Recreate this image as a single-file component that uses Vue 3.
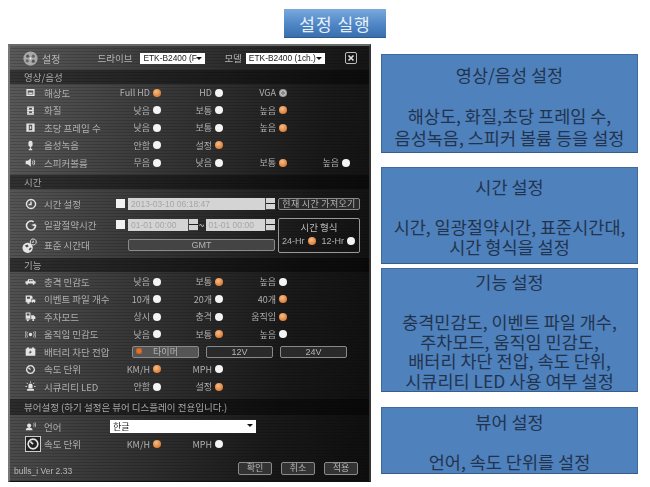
<script setup>
const icons = {
  display: { d: 'M2 3h12v10H2zM4 5v6h8V5z', f: 'M5 8h6v2H5z' },
  film: { d: 'M3 2h10v12H3zM6 4v3h4V4zM6 9v3h4V9z', f: 'M3.8 3.5h1v1h-1zM3.8 6h1v1h-1zM3.8 9h1v1h-1zM3.8 11.5h1v1h-1zM11.2 3.5h1v1h-1zM11.2 6h1v1h-1zM11.2 9h1v1h-1zM11.2 11.5h1v1h-1z', dark: true },
  frames: { d: 'M2 2h12v12H2zM5.5 4v8h5V4z', f: 'M7 6h2v4H7z' },
  mic: { d: 'M8 1c1.7 0 3 1.2 3 2.8v3.4C11 8.8 9.7 10 8 10S5 8.8 5 7.2V3.8C5 2.2 6.3 1 8 1zM7 10.5h2V13h1.5v2h-5v-2H7z' },
  speaker: { d: 'M1 5.5h3L8.5 2v12L4 10.5H1z', s: 'M10.5 5.5c1.2 1.5 1.2 3.5 0 5M12.5 4c2 2.4 2 5.6 0 8' },
  clock: { s: 'M8 2a6 6 0 1 0 .01 0M8 4.5V8.6H4.8', w: 1.9 },
  dst: { s: 'M11.5 3.8A6 6 0 1 0 14 8', w: 2.2, d: 'M8 8l6-2v4z' },
  globe: { d: 'M6 5a5.5 5.5 0 1 0 .01 0zM3 8l3-1 1 2-2 1zM7 12l2-2 1.4 1-2 2.4z', s: 'M12 1a3.2 3.2 0 1 0 .01 0M12 2.8v1.8h-1.5', w: 1 },
  car: { d: 'M0.5 8l2.5-.5 2-3h6l2.5 3 2 .5v3h-15zM6 5.5v2h2v-2zM9 5.5v2h2v-2z', f: 'M3 10a1.3 1.3 0 1 0 .01 0M12.5 10a1.3 1.3 0 1 0 .01 0' },
  event: { d: 'M1 2h8l2 2v3H9v5H6.5v2h-3v-2H1zM3 4v3h4V4z', f: 'M9.5 8h5.5v3.5h-1V13h-1v-1.5h-2V13h-1v-1.5h-.5z' },
  truck: { d: 'M1 2h7v8.5H1zM2.5 3.5v3h4v-3zM9 6h3.5l2.5 2.5v3H9zM1 11h7v1.5H1z', f: 'M4 12a1.5 1.5 0 1 0 .01 0M12 11.5a1.5 1.5 0 1 0 .01 0' },
  motion: { d: 'M8 5.5a2.5 2.5 0 1 0 .01 0z', s: 'M3.8 4.2c-1.5 2.2-1.5 5.4 0 7.6M12.2 4.2c1.5 2.2 1.5 5.4 0 7.6M1.7 2.8c-1.9 3-1.9 7.4 0 10.4M14.3 2.8c1.9 3 1.9 7.4 0 10.4', w: 1 },
  battery: { d: 'M3 2h3v1.5h4V2h3v1.5h2V14H1V3.5h2zM9 6L5 9.5h2.4L6 12l4.5-3.5H8z' },
  speedo: { s: 'M8 2.4a5.6 5.6 0 1 0 .01 0M8 8.2L5 5.4', w: 1.9 },
  led: { d: 'M5 6.5C5 4.8 6.2 3.5 8 3.5s3 1.3 3 3V11H5zM3 11.5h10V14H3z', s: 'M8 .5v2M2.4 2.6l1.8 1.8M13.6 2.6l-1.8 1.8M.6 8h2.4M13 8h2.4', w: 1.2 },
  person: { d: 'M6 3.5a3 3 0 1 1-.01 0zM1 13.5c.2-3 2-4.2 5-4.2s4.8 1.2 5 4.2z', s: 'M12.5 3c1 1.6 1 3.6 0 5M14.5 2c1.3 2.2 1.3 5 0 7', w: 1 },
}

const videoRows = [
  { icon: 'display', label: '해상도', options: [['Full HD', 'on'], ['HD', ''], ['VGA', 'off']] },
  { icon: 'film', label: '화질', options: [['낮음', ''], ['보통', ''], ['높음', 'on']] },
  { icon: 'frames', label: '초당 프레임 수', options: [['낮음', ''], ['보통', ''], ['높음', 'on']] },
  { icon: 'mic', label: '음성녹음', options: [['안함', ''], ['설정', 'on']] },
  { icon: 'speaker', label: '스피커볼륨', options: [['무음', ''], ['낮음', ''], ['보통', 'on'], ['높음', '']] },
]

const featureRows = [
  { icon: 'car', label: '충격 민감도', options: [['낮음', ''], ['보통', 'on'], ['높음', '']] },
  { icon: 'event', label: '이벤트 파일 개수', options: [['10개', ''], ['20개', ''], ['40개', 'on']] },
  { icon: 'truck', label: '주차모드', options: [['상시', ''], ['충격', ''], ['움직임', 'on']] },
  { icon: 'motion', label: '움직임 민감도', options: [['낮음', ''], ['보통', 'on'], ['높음', '']] },
]

const featureRowsEnd = [
  { icon: 'speedo', label: '속도 단위', options: [['KM/H', 'on'], ['MPH', '']] },
  { icon: 'led', label: '시큐리티 LED', options: [['안함', ''], ['설정', 'on']] },
]

const notes = [
  { title: '영상/음성 설정', kind: 'video', lines: ['해상도, 화질,초당 프레임 수,', '음성녹음, 스피커 볼륨 등을 설정'] },
  { title: '시간 설정', kind: 'time', lines: ['시간, 일광절약시간, 표준시간대,', '시간 형식을 설정'] },
  { title: '기능 설정', kind: 'feature', lines: ['충격민감도, 이벤트 파일 개수,', '주차모드, 움직임 민감도,', '배터리 차단 전압, 속도 단위,', '시큐리티 LED 사용 여부 설정'] },
  { title: '뷰어 설정', kind: 'viewer', lines: ['언어, 속도 단위를 설정'] },
]
</script>

<template>
  <div class="page">
    <div class="run-title">설정 실행</div>

    <div class="main">
      <section class="window">
        <header class="win-head">
          <svg class="logo" viewBox="0 0 16 16" aria-hidden="true">
            <circle cx="8" cy="8" r="7.6" fill="#a9a9a9" />
            <circle cx="5" cy="5.5" r="1.7" fill="#555" />
            <circle cx="11" cy="5.5" r="1.7" fill="#666" />
            <circle cx="4.5" cy="10.5" r="1.7" fill="#666" />
            <circle cx="11" cy="10.8" r="1.7" fill="#555" />
            <circle cx="8" cy="8" r="1" fill="#eee" />
          </svg>
          <span class="win-title">설정</span>
          <span class="head-label drive-label">드라이브</span>
          <div class="select drive">ETK-B2400 (F<i class="caret"></i></div>
          <span class="head-label model-label">모델</span>
          <div class="select model">ETK-B2400 (1ch.)<i class="caret"></i></div>
          <span class="close">
            <svg viewBox="0 0 12 12" aria-hidden="true"><path d="M3 3l6 6M9 3l-6 6" /></svg>
          </span>
        </header>

        <div class="band">영상/음성</div>
        <div class="body video-body">
          <div v-for="row in videoRows" :key="row.label" class="row">
            <svg class="icon" viewBox="0 0 16 16" aria-hidden="true">
              <path v-if="icons[row.icon].d" class="solid" :d="icons[row.icon].d" />
              <path v-if="icons[row.icon].f" class="solid" :class="{ inner: icons[row.icon].dark }" :d="icons[row.icon].f" />
              <path v-if="icons[row.icon].s" class="line" :stroke-width="icons[row.icon].w || 1.3" :d="icons[row.icon].s" />
            </svg>
            <span class="label">{{ row.label }}</span>
            <span v-for="opt in row.options" :key="opt[0]" class="opt">
              {{ opt[0] }}<i class="dot" :class="opt[1]"></i>
            </span>
          </div>
        </div>

        <div class="band">시간</div>
        <div class="body time-body">
          <div class="time-grid">
            <svg class="icon" viewBox="0 0 16 16" aria-hidden="true">
              <path class="line" stroke-width="1.9" :d="icons.clock.s" />
            </svg>
            <span class="label">시간 설정</span>
            <i class="check"></i>
            <div class="field wide">2013-03-10 06:18:47<i class="spin"></i></div>
            <div class="ghost-btn now">현재 시간 가져오기</div>

            <svg class="icon" viewBox="0 0 16 16" aria-hidden="true">
              <path class="line" stroke-width="2.2" :d="icons.dst.s" />
              <path class="solid" :d="icons.dst.d" />
            </svg>
            <span class="label">일광절약시간</span>
            <i class="check"></i>
            <div class="range">
              <div class="field">01-01 00:00<i class="spin"></i></div>
              <span class="tilde">~</span>
              <div class="field">01-01 00:00<i class="spin"></i></div>
            </div>
            <div class="format">
              <div class="format-title">시간 형식</div>
              <div class="format-opts">
                <span class="opt">24-Hr<i class="dot on"></i></span>
                <span class="opt">12-Hr<i class="dot"></i></span>
              </div>
            </div>

            <svg class="icon globe" viewBox="0 0 16 16" aria-hidden="true">
              <path class="solid" :d="icons.globe.d" />
              <path class="line" stroke-width="1" :d="icons.globe.s" />
            </svg>
            <span class="label">표준 시간대</span>
            <span></span>
            <div class="ghost-btn gmt">GMT</div>
          </div>
        </div>

        <div class="band">기능</div>
        <div class="body feature-body">
          <div v-for="row in featureRows" :key="row.label" class="row">
            <svg class="icon" viewBox="0 0 16 16" aria-hidden="true">
              <path v-if="icons[row.icon].d" class="solid" :d="icons[row.icon].d" />
              <path v-if="icons[row.icon].f" class="solid" :d="icons[row.icon].f" />
              <path v-if="icons[row.icon].s" class="line" :stroke-width="icons[row.icon].w || 1.3" :d="icons[row.icon].s" />
            </svg>
            <span class="label">{{ row.label }}</span>
            <span v-for="opt in row.options" :key="opt[0]" class="opt">
              {{ opt[0] }}<i class="dot" :class="opt[1]"></i>
            </span>
          </div>
          <div class="row">
            <svg class="icon" viewBox="0 0 16 16" aria-hidden="true">
              <path class="solid" :d="icons.battery.d" />
            </svg>
            <span class="label">배터리 차단 전압</span>
            <div class="volts">
              <div class="ghost-btn volt active"><i class="led-box"></i>타이머</div>
              <div class="ghost-btn volt">12V</div>
              <div class="ghost-btn volt">24V</div>
            </div>
          </div>
          <div v-for="row in featureRowsEnd" :key="row.label" class="row">
            <svg class="icon" viewBox="0 0 16 16" aria-hidden="true">
              <path v-if="icons[row.icon].d" class="solid" :d="icons[row.icon].d" />
              <path v-if="icons[row.icon].s" class="line" :stroke-width="icons[row.icon].w || 1.3" :d="icons[row.icon].s" />
            </svg>
            <span class="label">{{ row.label }}</span>
            <span v-for="opt in row.options" :key="opt[0]" class="opt">
              {{ opt[0] }}<i class="dot" :class="opt[1]"></i>
            </span>
          </div>
        </div>

        <div class="band viewer-band">뷰어설정 (하기 설정은 뷰어 디스플레이 전용입니다.)</div>
        <div class="body viewer-body">
          <div class="row">
            <svg class="icon" viewBox="0 0 16 16" aria-hidden="true">
              <path class="solid" :d="icons.person.d" />
              <path class="line" stroke-width="1" :d="icons.person.s" />
            </svg>
            <span class="label">언어</span>
            <div class="select language">한글<i class="caret"></i></div>
          </div>
          <div class="row">
            <span class="boxed-icon">
              <svg viewBox="0 0 16 16" aria-hidden="true">
                <path class="line" stroke-width="1.9" :d="icons.speedo.s" />
              </svg>
            </span>
            <span class="label">속도 단위</span>
            <span class="opt">KM/H<i class="dot on"></i></span>
            <span class="opt">MPH<i class="dot"></i></span>
          </div>
        </div>

        <footer class="win-foot">
          <span class="version">bulls_i Ver 2.33</span>
          <div class="foot-btns">
            <div class="ghost-btn foot">확인</div>
            <div class="ghost-btn foot">취소</div>
            <div class="ghost-btn foot">적용</div>
          </div>
        </footer>
      </section>

      <aside class="notes">
        <div v-for="note in notes" :key="note.title" class="note" :class="note.kind">
          <div class="note-title">{{ note.title }}</div>
          <div class="note-lines">
            <div v-for="line in note.lines" :key="line">{{ line }}</div>
          </div>
        </div>
      </aside>
    </div>
  </div>
</template>

<style>
html,
body {
  margin: 0;
  background: #fff;
}
</style>

<style scoped>
.page {
  width: 650px;
  height: 487px;
  overflow: hidden;
  background: #fff;
  font-family: 'Noto Sans CJK KR', 'Liberation Sans', sans-serif;
}

.run-title {
  width: 102px;
  height: 29px;
  margin: 9px 0 0 284px;
  box-sizing: border-box;
  display: flex;
  align-items: center;
  justify-content: center;
  font-size: 17px;
  letter-spacing: 1px;
  color: #e8f0fa;
  background: linear-gradient(#7aa9dc, #4f86c6 55%, #3a6fae);
  border-bottom: 1px solid #2f5a8e;
}

.main {
  display: flex;
  align-items: flex-start;
  gap: 10px;
  margin: 6px 0 0 8px;
}

/* program window */
.window {
  width: 363px;
  height: 438px;
  box-sizing: border-box;
  display: flex;
  flex-direction: column;
  border-top: 2px solid #6a6a6a;
  border-left: 2px solid #777;
  border-right: 2px solid #333;
  border-bottom: 1px solid #111;
  color: #b4b4b4;
  font-size: 9.5px;
  background:
    repeating-linear-gradient(0deg, rgba(0, 0, 0, 0.16) 0 1px, transparent 1px 3px),
    linear-gradient(100deg, #5a5a5a 0%, #3a3a3a 35%, #191919 75%, #0e0e0e 100%);
  filter: blur(0.35px);
}

.win-head {
  height: 24px;
  display: flex;
  align-items: center;
  flex: 0 0 auto;
}

.logo {
  width: 15px;
  height: 15px;
  margin-left: 13px;
}

.win-title {
  margin-left: 4px;
  font-size: 10px;
}

.head-label {
  font-size: 9.5px;
}

.drive-label {
  margin-left: 37px;
}

.model-label {
  margin-left: 19px;
}

.select {
  position: relative;
  height: 11px;
  line-height: 11px;
  box-sizing: border-box;
  padding-left: 3px;
  background: #fff;
  color: #222;
  font-size: 8.4px;
  font-family: 'Liberation Sans', 'Noto Sans CJK KR', sans-serif;
  white-space: nowrap;
  overflow: hidden;
}

.drive {
  width: 65px;
  margin-left: 8px;
}

.model {
  width: 79px;
  margin-left: 4px;
}

.caret {
  position: absolute;
  right: 3px;
  top: 4px;
  border-left: 3px solid transparent;
  border-right: 3px solid transparent;
  border-top: 3px solid #111;
}

.close {
  width: 12px;
  height: 12px;
  margin-left: 20px;
  box-sizing: border-box;
  border: 1px solid #bbb;
  border-radius: 2px;
  display: flex;
}

.close svg {
  width: 100%;
  height: 100%;
}

.close path {
  stroke: #ddd;
  stroke-width: 2;
  fill: none;
}

.band {
  height: 14px;
  line-height: 14px;
  flex: 0 0 auto;
  padding-left: 14px;
  background: rgba(0, 0, 0, 0.42);
  color: #a8a8a8;
}

.viewer-band {
  height: 16px;
  line-height: 16px;
}

.body {
  flex: 0 0 auto;
}

.video-body {
  height: 91px;
}

.time-body {
  height: 69px;
}

.feature-body {
  height: 127px;
  padding-top: 1px;
  box-sizing: border-box;
}

.viewer-body {
  height: 40px;
  padding-top: 3px;
  box-sizing: border-box;
}

.row {
  height: 17.5px;
  display: grid;
  grid-template-columns: 12px 22px 72px 45px 62px 64px 63px;
  align-items: center;
}

.row > .icon,
.row > .boxed-icon {
  grid-column: 2;
}

.row .label {
  grid-column: 3;
}

.icon {
  width: 11px;
  height: 11px;
  margin-left: 3px;
}

.solid {
  fill: #e4e4e4;
  fill-rule: evenodd;
}

.solid.inner {
  fill: #333;
}

.line {
  fill: none;
  stroke: #e4e4e4;
}

.label {
  white-space: nowrap;
  color: #aeaeae;
}

.opt {
  display: flex;
  align-items: center;
  justify-content: flex-end;
  gap: 3px;
  white-space: nowrap;
  color: #b0b0b0;
  font-size: 9px;
}

.dot {
  width: 8px;
  height: 8px;
  border-radius: 50%;
  background: #f4f4f4;
  flex: 0 0 auto;
}

.dot.on {
  background: radial-gradient(circle at 40% 35%, #f6bd8a, #dd7f36 70%, #b5682e);
}

.dot.off {
  background: radial-gradient(circle, #8b8b8b 30%, #cfcfcf 32%, #8e8e8e 70%);
}

/* time section */
.time-grid {
  display: grid;
  grid-template-columns: 12px 22px 72px 12px 147px 85px;
  grid-template-rows: 21px 21px 20px;
  padding-top: 4px;
  align-items: center;
}

.time-grid > .icon {
  grid-column: 2;
  width: 12px;
  height: 12px;
}

.time-grid > .icon.globe {
  width: 15px;
  height: 15px;
  margin-left: 0;
}

.check {
  width: 9px;
  height: 9px;
  background: #f2f2f2;
  grid-column: 4;
}

.field {
  position: relative;
  height: 12px;
  line-height: 12px;
  padding-left: 3px;
  box-sizing: border-box;
  background: #d4d4d4;
  color: #a5a5a5;
  font-size: 8.5px;
  font-family: 'Liberation Sans', sans-serif;
  flex: 1;
  min-width: 0;
  white-space: nowrap;
}

.field.wide {
  flex: none;
}

.spin {
  position: absolute;
  right: 0;
  top: 0;
  bottom: 0;
  width: 10px;
  box-sizing: border-box;
  background: linear-gradient(#d4d4d4 0 5px, #222 5px 6px, #d4d4d4 6px);
  border-left: 1px solid #444;
  border-bottom: 1px solid #444;
}

.range {
  display: flex;
  align-items: center;
}

.tilde {
  width: 8px;
  text-align: center;
  color: #ddd;
  font-size: 10px;
  flex: 0 0 auto;
}

.ghost-btn {
  height: 12px;
  line-height: 10px;
  box-sizing: border-box;
  border: 1px solid #8a8a8a;
  border-radius: 2px;
  background: #333;
  color: #b4b4b4;
  text-align: center;
  font-size: 9px;
  white-space: nowrap;
}

.now {
  margin-left: 3px;
  background: #2b2b2b;
  font-size: 9px;
  letter-spacing: 0.3px;
}

.gmt {
  grid-column: 5;
  grid-row: 3;
  background: #444;
  font-family: 'Liberation Sans', sans-serif;
}

.format {
  grid-column: 6;
  grid-row: 2 / span 2;
  align-self: start;
  width: 82px;
  height: 35px;
  margin: 4px 0 0 3px;
  box-sizing: border-box;
  border: 1px solid #999;
  border-radius: 2px;
  text-align: center;
}

.format-title {
  height: 17px;
  line-height: 17px;
  color: #bdbdbd;
}

.format-opts {
  display: flex;
  justify-content: space-between;
  padding: 0 4px 0 3px;
}

.format-opts .opt {
  font-family: 'Liberation Sans', sans-serif;
}

/* feature section */
.volts {
  grid-column: 4 / span 4;
  display: flex;
  gap: 7px;
  margin-left: 16px;
}

.volt {
  position: relative;
  width: 67px;
  background: #2a2a2a;
  font-family: 'Liberation Sans', sans-serif;
}

.volt.active {
  background: #555;
  font-family: 'Noto Sans CJK KR', sans-serif;
}

.led-box {
  position: absolute;
  left: 3px;
  top: 1px;
  width: 6px;
  height: 6px;
  background: radial-gradient(circle, #e5702a 40%, #7a4a2a);
}

/* viewer section */
.language {
  grid-column: 4 / span 4;
  width: 146px;
  height: 13px;
  line-height: 13px;
  margin-left: -6px;
  font-family: 'Noto Sans CJK KR', sans-serif;
  font-size: 9px;
}

.boxed-icon {
  width: 16px;
  height: 16px;
  margin-left: 3px;
  box-sizing: border-box;
  border: 1px solid #ccc;
  background: #222;
  display: flex;
}

.win-foot {
  flex: 1;
  display: flex;
  align-items: center;
  justify-content: space-between;
  padding: 0 11px 0 4px;
}

.version {
  font-family: 'Liberation Sans', sans-serif;
  font-size: 8.5px;
  color: #b8b8b8;
  margin-top: 5px;
}

.foot-btns {
  display: flex;
  gap: 9px;
}

.foot {
  width: 34px;
  height: 13px;
}

/* blue note boxes */
.notes {
  width: 257px;
  margin-top: 10px;
  display: flex;
  flex-direction: column;
  align-items: stretch;
}

.note {
  box-sizing: border-box;
  background: #4f81bd;
  border: 1px solid #3f6a9d;
  border-bottom-color: #385d8a;
  text-align: center;
  color: #22344d;
  font-size: 17.5px;
}

.note-title {
  line-height: 20px;
}

.note-lines {
  margin-top: 20px;
  line-height: 20px;
  white-space: nowrap;
}

.note.video {
  height: 99px;
  padding-top: 10px;
}

.note.video .note-lines {
  line-height: 22px;
}

.note.time {
  height: 97px;
  padding-top: 9px;
  margin-top: 14px;
}

.note.feature {
  height: 124px;
  padding-top: 3px;
  margin-top: 4px;
}

.note.feature .note-lines {
  line-height: 19.5px;
}

.note.viewer {
  height: 67px;
  padding-top: 4px;
  margin-top: 15px;
}
</style>
